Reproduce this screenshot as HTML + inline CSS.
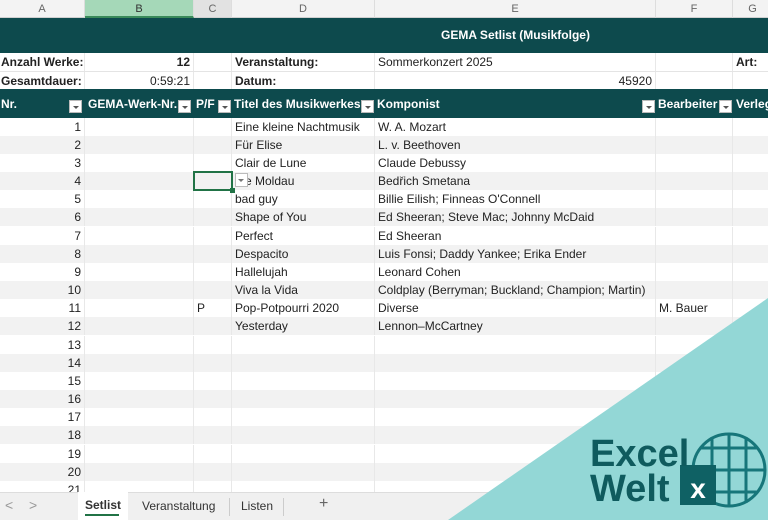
<!DOCTYPE html>
<html><head><meta charset="utf-8"><style>
*{margin:0;padding:0;box-sizing:border-box}
body{width:768px;height:520px;overflow:hidden;background:#fff;font-family:"Liberation Sans","Noto Sans CJK SC",sans-serif;font-size:12px;color:#222;position:relative}
.a{position:absolute;white-space:nowrap}
.colh{top:0;height:18px;background:#f3f3f3;border-right:1px solid #ddd;border-bottom:1px solid #d0d0d0;color:#666;text-align:center;line-height:18px;font-size:11px}
.row{position:absolute;left:0;width:768px;height:18px}
.row.g{background:#f2f2f2}
.c{position:absolute;top:0;height:18px;line-height:18px;border-right:1px solid #e8e8e8;padding:0 3px;overflow:hidden;white-space:nowrap}
.c0{left:0;width:85px;text-align:right}
.c1{left:85px;width:109px}
.c2{left:194px;width:38px}
.c3{left:232px;width:143px}
.c4{left:375px;width:281px}
.c5{left:656px;width:77px}
.c6{left:733px;width:40px}
.hd{color:#fff;font-weight:bold}
.dd{position:absolute;width:13px;height:13px;background:#fff;border:1px solid #bbb;top:100px}
.dd:after{content:"";position:absolute;left:3px;top:5px;border-left:3px solid transparent;border-right:3px solid transparent;border-top:3px solid #555}
.b{font-weight:bold}
</style></head><body>
<div class="a colh" style="left:0;width:85px">A</div>
<div class="a colh" style="left:85px;width:109px;background:#a5d8b8;border-bottom:2px solid #3a8a5a;color:#333">B</div>
<div class="a colh" style="left:194px;width:38px;background:#e2e2e2">C</div>
<div class="a colh" style="left:232px;width:143px">D</div>
<div class="a colh" style="left:375px;width:281px">E</div>
<div class="a colh" style="left:656px;width:77px">F</div>
<div class="a colh" style="left:733px;width:40px">G</div>

<div class="a" style="left:0;top:18px;width:768px;height:35px;background:#0d4a4d"></div>
<div class="a hd" style="left:375px;width:281px;top:18px;line-height:35px;text-align:center">GEMA Setlist (Musikfolge)</div>

<div class="row" style="top:53px"><div class="c c0 b" style="text-align:left;padding-left:1px">Anzahl Werke:</div><div class="c c1 b" style="text-align:right">12</div><div class="c c2"></div><div class="c c3 b">Veranstaltung:</div><div class="c c4">Sommerkonzert 2025</div><div class="c c5"></div><div class="c c6 b">Art:</div></div>
<div class="row" style="top:71px;border-top:1px solid #e4e4e4"><div class="c c0 b" style="text-align:left;padding-left:1px">Gesamtdauer:</div><div class="c c1" style="text-align:right">0:59:21</div><div class="c c2"></div><div class="c c3 b">Datum:</div><div class="c c4" style="text-align:right">45920</div><div class="c c5"></div><div class="c c6"></div></div>

<div class="a" style="left:0;top:89px;width:768px;height:29px;background:#0d4a4d"></div>
<div class="a hd" style="left:1px;top:97px">Nr.</div>
<div class="a hd" style="left:88px;top:97px">GEMA-Werk-Nr.</div>
<div class="a hd" style="left:196px;top:97px">P/F</div>
<div class="a hd" style="left:234px;top:97px">Titel des Musikwerkes</div>
<div class="a hd" style="left:377px;top:97px">Komponist</div>
<div class="a hd" style="left:658px;top:97px">Bearbeiter</div>
<div class="a hd" style="left:736px;top:97px">Verleg</div>
<div class="dd" style="left:69px"></div><div class="dd" style="left:178px"></div><div class="dd" style="left:218px"></div><div class="dd" style="left:361px"></div><div class="dd" style="left:642px"></div><div class="dd" style="left:719px"></div>

<div class="row" style="top:118px"><div class="c c0">1</div><div class="c c1"></div><div class="c c2"></div><div class="c c3">Eine kleine Nachtmusik</div><div class="c c4">W. A. Mozart</div><div class="c c5"></div><div class="c c6"></div></div>
<div class="row g" style="top:136px"><div class="c c0">2</div><div class="c c1"></div><div class="c c2"></div><div class="c c3">Für Elise</div><div class="c c4">L. v. Beethoven</div><div class="c c5"></div><div class="c c6"></div></div>
<div class="row" style="top:154px"><div class="c c0">3</div><div class="c c1"></div><div class="c c2"></div><div class="c c3">Clair de Lune</div><div class="c c4">Claude Debussy</div><div class="c c5"></div><div class="c c6"></div></div>
<div class="row g" style="top:172px"><div class="c c0">4</div><div class="c c1"></div><div class="c c2"></div><div class="c c3">&nbsp;&nbsp;&nbsp;e Moldau</div><div class="c c4">Bedřich Smetana</div><div class="c c5"></div><div class="c c6"></div></div>
<div class="row" style="top:190px"><div class="c c0">5</div><div class="c c1"></div><div class="c c2"></div><div class="c c3">bad guy</div><div class="c c4">Billie Eilish; Finneas O'Connell</div><div class="c c5"></div><div class="c c6"></div></div>
<div class="row g" style="top:208px"><div class="c c0">6</div><div class="c c1"></div><div class="c c2"></div><div class="c c3">Shape of You</div><div class="c c4">Ed Sheeran; Steve Mac; Johnny McDaid</div><div class="c c5"></div><div class="c c6"></div></div>
<div class="row" style="top:227px"><div class="c c0">7</div><div class="c c1"></div><div class="c c2"></div><div class="c c3">Perfect</div><div class="c c4">Ed Sheeran</div><div class="c c5"></div><div class="c c6"></div></div>
<div class="row g" style="top:245px"><div class="c c0">8</div><div class="c c1"></div><div class="c c2"></div><div class="c c3">Despacito</div><div class="c c4">Luis Fonsi; Daddy Yankee; Erika Ender</div><div class="c c5"></div><div class="c c6"></div></div>
<div class="row" style="top:263px"><div class="c c0">9</div><div class="c c1"></div><div class="c c2"></div><div class="c c3">Hallelujah</div><div class="c c4">Leonard Cohen</div><div class="c c5"></div><div class="c c6"></div></div>
<div class="row g" style="top:281px"><div class="c c0">10</div><div class="c c1"></div><div class="c c2"></div><div class="c c3">Viva la Vida</div><div class="c c4">Coldplay (Berryman; Buckland; Champion; Martin)</div><div class="c c5"></div><div class="c c6"></div></div>
<div class="row" style="top:299px"><div class="c c0">11</div><div class="c c1"></div><div class="c c2">P</div><div class="c c3">Pop-Potpourri 2020</div><div class="c c4">Diverse</div><div class="c c5">M. Bauer</div><div class="c c6"></div></div>
<div class="row g" style="top:317px"><div class="c c0">12</div><div class="c c1"></div><div class="c c2"></div><div class="c c3">Yesterday</div><div class="c c4">Lennon–McCartney</div><div class="c c5"></div><div class="c c6"></div></div>
<div class="row" style="top:336px"><div class="c c0">13</div><div class="c c1"></div><div class="c c2"></div><div class="c c3"></div><div class="c c4"></div><div class="c c5"></div></div>
<div class="row g" style="top:354px"><div class="c c0">14</div><div class="c c1"></div><div class="c c2"></div><div class="c c3"></div><div class="c c4"></div><div class="c c5"></div></div>
<div class="row" style="top:372px"><div class="c c0">15</div><div class="c c1"></div><div class="c c2"></div><div class="c c3"></div><div class="c c4"></div><div class="c c5"></div></div>
<div class="row g" style="top:390px"><div class="c c0">16</div><div class="c c1"></div><div class="c c2"></div><div class="c c3"></div><div class="c c4"></div><div class="c c5"></div></div>
<div class="row" style="top:408px"><div class="c c0">17</div><div class="c c1"></div><div class="c c2"></div><div class="c c3"></div><div class="c c4"></div><div class="c c5"></div></div>
<div class="row g" style="top:426px"><div class="c c0">18</div><div class="c c1"></div><div class="c c2"></div><div class="c c3"></div><div class="c c4"></div><div class="c c5"></div></div>
<div class="row" style="top:445px"><div class="c c0">19</div><div class="c c1"></div><div class="c c2"></div><div class="c c3"></div><div class="c c4"></div><div class="c c5"></div></div>
<div class="row g" style="top:463px"><div class="c c0">20</div><div class="c c1"></div><div class="c c2"></div><div class="c c3"></div><div class="c c4"></div><div class="c c5"></div></div>
<div class="row" style="top:481px"><div class="c c0">21</div><div class="c c1"></div><div class="c c2"></div><div class="c c3"></div><div class="c c4"></div></div>

<div class="a" style="left:193px;top:171px;width:40px;height:20px;border:2px solid #217346"></div>
<div class="a" style="left:230px;top:188px;width:5px;height:5px;background:#217346"></div>
<div class="a" style="left:235px;top:173px;width:13px;height:14px;background:#fff;border:1px solid #bbb"></div>
<div class="a" style="left:238px;top:179px;border-left:3px solid transparent;border-right:3px solid transparent;border-top:3px solid #777"></div>

<div class="a" style="left:0;top:492px;width:768px;height:28px;background:#f0f0f0;border-top:1px solid #ddd"></div>
<div class="a" style="left:5px;top:497px;color:#999;font-size:14px">&lt;</div>
<div class="a" style="left:29px;top:497px;color:#999;font-size:14px">&gt;</div>
<div class="a" style="left:78px;top:492px;width:50px;height:28px;background:#fff"></div>
<div class="a b" style="left:85px;top:498px;color:#333">Setlist</div>
<div class="a" style="left:85px;top:514px;width:34px;height:2px;background:#217346"></div>
<div class="a" style="left:142px;top:499px;color:#333">Veranstaltung</div>
<div class="a" style="left:229px;top:498px;width:1px;height:18px;background:#ccc"></div>
<div class="a" style="left:241px;top:499px;color:#333">Listen</div>
<div class="a" style="left:283px;top:498px;width:1px;height:18px;background:#ccc"></div>
<div class="a" style="left:319px;top:495px;color:#666;font-size:16px">+</div>

<svg class="a" style="left:0;top:0" width="768" height="520" viewBox="0 0 768 520">
<polygon points="768,298 768,520 448,520" fill="#93d7d6"/>
<g stroke="#17767a" stroke-width="3" fill="none">
<circle cx="729" cy="470" r="36"/>
<line x1="700" y1="448" x2="758" y2="448"/><line x1="694" y1="470" x2="765" y2="470"/><line x1="700" y1="492" x2="758" y2="492"/>
<line x1="712" y1="437" x2="712" y2="503"/><line x1="729" y1="434" x2="729" y2="506"/><line x1="746" y1="437" x2="746" y2="503"/>
</g>
<rect x="680" y="465" width="36" height="40" fill="#0f6164"/>
<text x="698" y="498" text-anchor="middle" fill="#fff" font-family="Liberation Sans" font-weight="bold" font-size="28">x</text>
<text x="590" y="466" fill="#0f5b5e" font-family="Liberation Sans" font-weight="bold" font-size="38">Excel</text>
<text x="590" y="501" fill="#0f5b5e" font-family="Liberation Sans" font-weight="bold" font-size="38">Welt</text>
</svg>
</body></html>
